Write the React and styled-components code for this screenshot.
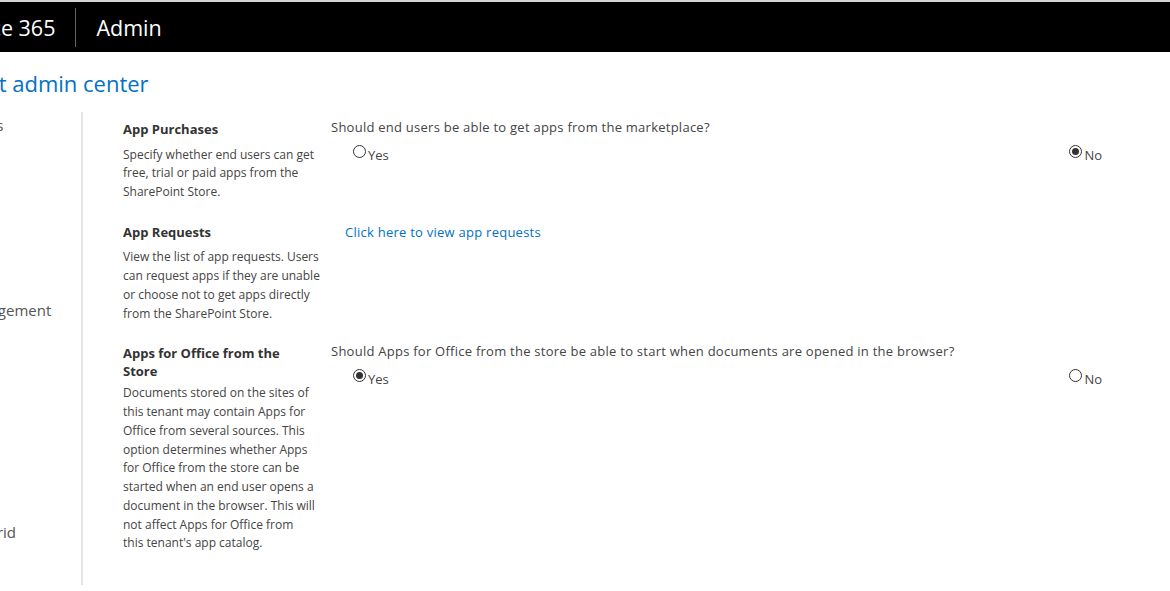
import React from 'react';
import styled, { createGlobalStyle } from 'styled-components';

const navItems = [
    'site collections',
    'infopath',
    'user profiles',
    'bcs',
    'term store',
    'records management',
    'search',
    'secure store',
    'apps',
    'sharing',
    'settings',
    'configure hybrid',
];

const purchasesLines = [
    'Specify whether end users can get',
    'free, trial or paid apps from the',
    'SharePoint Store.',
];

const requestsLines = [
    'View the list of app requests. Users',
    'can request apps if they are unable',
    'or choose not to get apps directly',
    'from the SharePoint Store.',
];

const officeLines = [
    'Documents stored on the sites of',
    'this tenant may contain Apps for',
    'Office from several sources. This',
    'option determines whether Apps',
    'for Office from the store can be',
    'started when an end user opens a',
    'document in the browser. This will',
    'not affect Apps for Office from',
    'this tenant\'s app catalog.',
];

export default function App() {
    return (
        <>
            <GlobalStyle />
            <Page>
                <TopBar>
                    <Brand>Office 365</Brand>
                    <Divider />
                    <Brand>Admin</Brand>
                </TopBar>
                <PageTitle>SharePoint admin center</PageTitle>
                <Body>
                    <Nav>
                        { navItems.map(item => <NavItem key={ item }>{ item }</NavItem>) }
                    </Nav>
                    <Main>
                        <Section>
                            <Info>
                                <Title>App Purchases</Title>
                                <Desc lines={ purchasesLines } />
                            </Info>
                            <Control>
                                <Question>Should end users be able to get apps from the marketplace?</Question>
                                <Options>
                                    <Radio label="Yes" />
                                    <Radio label="No" checked />
                                </Options>
                            </Control>
                        </Section>
                        <Section>
                            <Info>
                                <Title>App Requests</Title>
                                <Desc lines={ requestsLines } />
                            </Info>
                            <Control>
                                <Link href="#">Click here to view app requests</Link>
                            </Control>
                        </Section>
                        <Section>
                            <Info>
                                <Title gap={ 4 }>Apps for Office from the Store</Title>
                                <Desc lines={ officeLines } />
                            </Info>
                            <Control>
                                <Question>Should Apps for Office from the store be able to start when documents are opened in the browser?</Question>
                                <Options>
                                    <Radio label="Yes" checked />
                                    <Radio label="No" />
                                </Options>
                            </Control>
                        </Section>
                    </Main>
                </Body>
            </Page>
        </>
    );
}

function Desc({ lines }) {
    return (
        <DescText>
            { lines.map((line, i) => <Line key={ i }>{ line }</Line>) }
        </DescText>
    );
}

function Radio({ label, checked }) {
    return (
        <Option>
            <Circle checked={ checked } />
            <OptionLabel>{ label }</OptionLabel>
        </Option>
    );
}

const GlobalStyle = createGlobalStyle`
    body {
        margin: 0;
        overflow: hidden;
        background: #ffffff;
        font-family: "Open Sans", "Noto Sans", sans-serif;
    }
`;

const Page = styled.div`
    margin-left: -137px;
    width: 1310px;
`;

const TopBar = styled.div`
    display: flex;
    align-items: center;
    height: 50px;
    background: #000000;
    border-top: 2px solid #d4d4d4;
    padding-left: 91px;
`;

const Brand = styled.div`
    color: #ffffff;
    font-size: 21.5px;
    font-family: "Open Sans", sans-serif;
    white-space: nowrap;
`;

const Divider = styled.div`
    width: 1px;
    height: 39px;
    background: #666666;
    margin: 0 20px;
`;

const PageTitle = styled.div`
    color: #0072c6;
    font-size: 22px;
    padding: 16px 0 0 31px;
    height: 44px;
    line-height: 30px;
    box-sizing: content-box;
    white-space: nowrap;
`;

const Body = styled.div`
    display: flex;
`;

const Nav = styled.div`
    width: 220px;
    border-right: 2px solid #e3e7e7;
    padding: 4px 0 0 38px;
    height: 473px;
    box-sizing: border-box;
    flex-shrink: 0;
`;

const NavItem = styled.div`
    color: #555555;
    font-size: 15px;
    height: 37px;
    line-height: 18px;
    white-space: nowrap;
`;

const Main = styled.div`
    padding: 8px 0 0 40px;
`;

const Section = styled.div`
    display: flex;
    margin-bottom: 21px;
`;

const Info = styled.div`
    width: 200px;
    margin-right: 8px;
`;

const Title = styled.div`
    color: #333333;
    font-size: 13px;
    font-weight: 700;
    line-height: 18px;
    max-width: 180px;
    margin-bottom: ${ props => props.gap ?? 7.5 }px;
`;

const DescText = styled.div`
    color: #444444;
    font-size: 12px;
    line-height: 18.75px;
`;

const Line = styled.div`
    white-space: nowrap;
`;

const Control = styled.div`
    width: 771px;
`;

const Question = styled.div`
    color: #444444;
    font-size: 13px;
    letter-spacing: 0.25px;
    line-height: 16px;
    margin-top: -1px;
    white-space: nowrap;
`;

const Options = styled.div`
    display: flex;
    justify-content: space-between;
    padding: 9px 0 0 22px;
`;

const Option = styled.div`
    display: flex;
    align-items: flex-start;
`;

const Circle = styled.span`
    width: 11px;
    height: 11px;
    border: 1px solid #333333;
    border-radius: 50%;
    position: relative;
    margin-top: 1px;
    &::after {
        content: '';
        display: ${ props => props.checked ? 'block' : 'none' };
        position: absolute;
        left: 2px;
        top: 2px;
        width: 7px;
        height: 7px;
        border-radius: 50%;
        background: #333333;
    }
`;

const OptionLabel = styled.span`
    color: #444444;
    font-size: 13px;
    padding-top: 2px;
    margin-left: 2px;
`;

const Link = styled.a`
    display: block;
    color: #0072c6;
    font-size: 13px;
    letter-spacing: 0.25px;
    text-decoration: none;
    padding-left: 14px;
    line-height: 18px;
`;
